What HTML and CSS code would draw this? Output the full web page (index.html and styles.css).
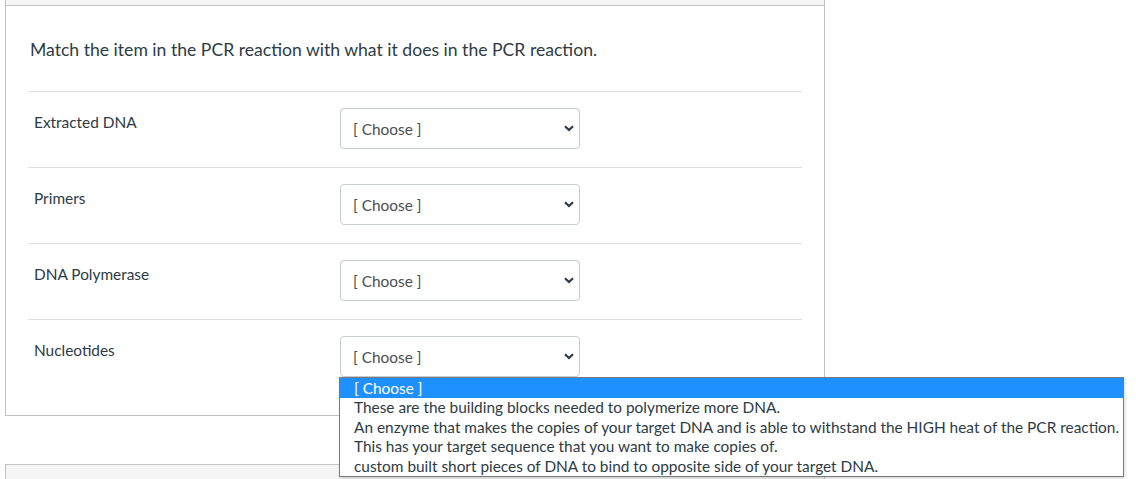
FILE: index.html
```html
<!DOCTYPE html>
<html>
<head>
<meta charset="utf-8">
<link rel="stylesheet" href="styles.css">
</head>
<body>
<div class="page">
  <div class="card">
    <div class="card-head"></div>
    <div class="card-body">
      <p class="question">Match the item in the PCR reaction with what it does in the PCR reaction.</p>
      <div class="answers">
        <div class="row">
          <div class="label">Extracted DNA</div>
          <div class="select"><span>[ Choose ]</span><svg class="chev" width="10" height="7" viewBox="0 0 10 7"><path d="M1 1.2 L5 5 L9 1.2" fill="none" stroke="#2d3b45" stroke-width="2.2"/></svg></div>
        </div>
        <div class="row">
          <div class="label">Primers</div>
          <div class="select"><span>[ Choose ]</span><svg class="chev" width="10" height="7" viewBox="0 0 10 7"><path d="M1 1.2 L5 5 L9 1.2" fill="none" stroke="#2d3b45" stroke-width="2.2"/></svg></div>
        </div>
        <div class="row">
          <div class="label">DNA Polymerase</div>
          <div class="select"><span>[ Choose ]</span><svg class="chev" width="10" height="7" viewBox="0 0 10 7"><path d="M1 1.2 L5 5 L9 1.2" fill="none" stroke="#2d3b45" stroke-width="2.2"/></svg></div>
        </div>
        <div class="row">
          <div class="label">Nucleotides</div>
          <div class="select"><span>[ Choose ]</span><svg class="chev" width="10" height="7" viewBox="0 0 10 7"><path d="M1 1.2 L5 5 L9 1.2" fill="none" stroke="#2d3b45" stroke-width="2.2"/></svg></div>
        </div>
      </div>
    </div>
  </div>
  <div class="card card-next">
    <div class="card-head next-head"><span class="qtitle">Question 2</span></div>
  </div>
</div>
<ul class="dropdown">
  <li class="opt selected">[ Choose ]</li>
  <li class="opt">These are the building blocks needed to polymerize more DNA.</li>
  <li class="opt">An enzyme that makes the copies of your target DNA and is able to withstand the HIGH heat of the PCR reaction.</li>
  <li class="opt">This has your target sequence that you want to make copies of.</li>
  <li class="opt">custom built short pieces of DNA to bind to opposite side of your target DNA.</li>
</ul>
</body>
</html>
```
FILE: styles.css
```css
html, body {
  margin: 0;
  padding: 0;
  background: #ffffff;
  font-family: Lato, "Open Sans", sans-serif;
  color: #2d3b45;
  overflow: hidden;
  height: 479px;
}
.page {
  padding-left: 5px;
  width: 820px;
}
.card {
  border: 1px solid #c2c2c2;
  border-top: none;
  background: #fff;
}
.card-head {
  height: 5px;
  background: #f5f5f5;
  border-bottom: 1px solid #c2c2c2;
}
.card-body {
  padding: 32px 22px 20px 22px;
}
.question {
  margin: 0 0 29px 2px;
  font-size: 17.6px;
  line-height: 24px;
}
.answers {
  display: flex;
  flex-direction: column;
}
.row {
  display: flex;
  height: 75px;
  border-top: 1px solid #dfdfdf;
  padding: 0 6px;
}
.label {
  width: 306px;
  padding-top: 21px;
  font-size: 15.4px;
  line-height: 18px;
}
.select {
  margin-top: 16px;
  width: 240px;
  height: 41px;
  box-sizing: border-box;
  border: 1px solid #c7cdd1;
  border-radius: 4px;
  display: flex;
  align-items: center;
  justify-content: space-between;
  padding: 0 5px 0 12px;
  font-size: 15.4px;
  color: #4a4f52;
}
.chev {
  display: block;
}
.card-next {
  margin-top: 48px;
  border-top: 1px solid #c2c2c2;
}
.next-head {
  height: 40px;
  border-bottom: none;
  padding: 12px 28px;
  font-size: 17px;
  font-weight: 700;
  color: #2d3b45;
}
.dropdown {
  position: absolute;
  left: 339px;
  top: 377px;
  width: 783px;
  margin: 0;
  padding: 0;
  list-style: none;
  background: #fff;
  border: 1px solid #7a7a7a;
  box-shadow: 1px 2px 3px rgba(0,0,0,0.15);
  font-size: 15.4px;
}
.opt {
  height: 19.5px;
  line-height: 19.5px;
  padding-left: 14px;
  white-space: nowrap;
  color: #2d3b45;
}
.opt.selected {
  background: #1e90ff;
  color: #ffffff;
  height: 20px;
  line-height: 20px;
}
```
